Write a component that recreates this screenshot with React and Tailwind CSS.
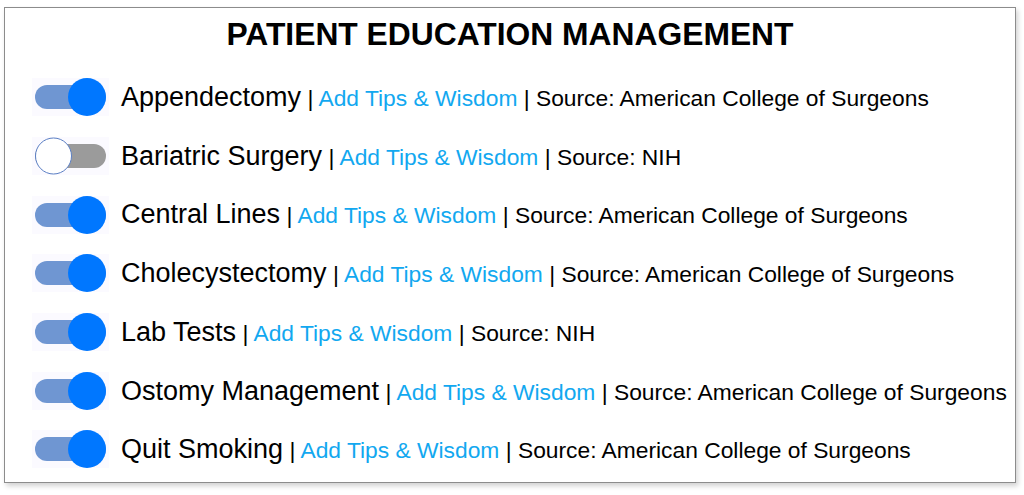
import { useState } from "react";

const topics = [
  { name: "Appendectomy", source: "American College of Surgeons", on: true },
  { name: "Bariatric Surgery", source: "NIH", on: false },
  { name: "Central Lines", source: "American College of Surgeons", on: true },
  { name: "Cholecystectomy", source: "American College of Surgeons", on: true },
  { name: "Lab Tests", source: "NIH", on: true },
  { name: "Ostomy Management", source: "American College of Surgeons", on: true },
  { name: "Quit Smoking", source: "American College of Surgeons", on: true },
];

const Toggle = ({ on, onClick }) => (
  <button
    type="button"
    onClick={onClick}
    className="bg-[#fbfaff] px-[3px] py-[7px] shrink-0"
  >
    <div
      className={`relative w-[71px] h-[24px] rounded-full ${
        on ? "bg-[#6f96d2]" : "bg-[#9b9b9b]"
      }`}
    >
      {on ? (
        <div className="absolute right-0 top-1/2 -translate-y-1/2 w-[38px] h-[38px] rounded-full bg-[#0077ff]" />
      ) : (
        <div className="absolute left-0 top-1/2 -translate-y-1/2 w-[37px] h-[37px] rounded-full bg-white border-[1.5px] border-[#5b7fc4]" />
      )}
    </div>
  </button>
);

export default function App() {
  const [items, setItems] = useState(topics);

  const flip = (i) =>
    setItems((prev) => prev.map((t, j) => (j === i ? { ...t, on: !t.on } : t)));

  return (
    <div className="w-[1024px] h-[495px] bg-white pt-[7px] pl-[4px] font-['Liberation_Sans',Arial,sans-serif] text-black">
      <div className="w-[1012px] h-[476px] border border-[#8c8c8c] shadow-[2px_3px_5px_rgba(0,0,0,0.18)] bg-white">
        <h1 className="pt-[8px] text-center text-[31.8px] leading-[36px] font-bold">
          PATIENT EDUCATION MANAGEMENT
        </h1>

        <ul className="mt-[16px] pl-[27px]">
          {items.map((t, i) => (
            <li key={t.name} className="h-[58.7px] flex items-center gap-[12px]">
              <Toggle on={t.on} onClick={() => flip(i)} />
              <p className="whitespace-nowrap">
                <span className="text-[27px]">{t.name}</span>
                <span className="text-[22.8px]">
                  {" | "}
                  <a href="#" className="text-[#12a8f0]">
                    Add Tips &amp; Wisdom
                  </a>
                  {" | "}Source: {t.source}
                </span>
              </p>
            </li>
          ))}
        </ul>
      </div>
    </div>
  );
}
